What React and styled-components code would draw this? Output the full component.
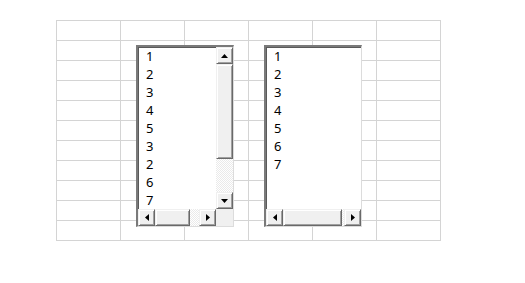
import React from "react";
import styled, { createGlobalStyle } from "styled-components";

const GlobalStyle = createGlobalStyle`
  html, body {
    margin: 0;
    padding: 0;
    background: #ffffff;
  }
`;

const Page = styled.div`
  position: relative;
  width: 525px;
  height: 283px;
  padding: 20px 0 0 56px;
  box-sizing: border-box;
  font-family: "Noto Sans", "Open Sans", sans-serif;
`;

// Spreadsheet background
const Sheet = styled.div`
  display: grid;
  grid-template-columns: repeat(6, 64px);
  grid-auto-rows: 20px;
  width: fit-content;
  border-top: 1px solid #d4d4d4;
  border-left: 1px solid #d4d4d4;
`;

const Cell = styled.div`
  border-right: 1px solid #d4d4d4;
  border-bottom: 1px solid #d4d4d4;
`;

// List box control sitting on the sheet
const ListBox = styled.div`
  position: absolute;
  top: 45px;
  left: ${(p) => p.$left}px;
  width: 98px;
  height: 182px;
  box-sizing: border-box;
  border-top: 2px solid #7a7a7a;
  border-left: 2px solid #7a7a7a;
  border-right: 1px solid #dcdcdc;
  border-bottom: 1px solid #dcdcdc;
  box-shadow: inset 1px 1px 0 #5a5a5a;
  background: #fff;
  display: grid;
  grid-template-columns: ${(p) => (p.$vscroll ? "1fr 17px" : "1fr")};
  grid-template-rows: 1fr 17px;
`;

const Items = styled.ul`
  list-style: none;
  margin: 0;
  padding: 0 0 0 8px;
  overflow: hidden;
`;

const Item = styled.li`
  height: 18px;
  line-height: 18px;
  font-size: 13px;
  color: #000;
`;

const VBar = styled.div`
  display: flex;
  flex-direction: column;
`;

const HBar = styled.div`
  display: flex;
`;

const Btn = styled.div`
  flex: 0 0 17px;
  box-sizing: border-box;
  background: #f0f0f0;
  border-top: 1px solid #f0f0f0;
  border-left: 1px solid #f0f0f0;
  border-right: 1px solid #696969;
  border-bottom: 1px solid #696969;
  box-shadow: inset 1px 1px 0 #ffffff, inset -1px -1px 0 #a0a0a0;
  display: flex;
  align-items: center;
  justify-content: center;
`;

const Thumb = styled(Btn)`
  flex: 0 0 ${(p) => p.$size}px;
`;

const Track = styled.div`
  flex: 1;
  background: repeating-conic-gradient(#eaeaea 0 25%, #ffffff 0 50%) 0 0 / 2px 2px;
`;

const Corner = styled.div`
  background: #f0f0f0;
`;

const Arrow = ({ dir }) => {
  const pts = {
    up: "0,4 7,4 3.5,0",
    down: "0,0 7,0 3.5,4",
    left: "4,0 4,7 0,3.5",
    right: "0,0 0,7 4,3.5",
  }[dir];
  const vertical = dir === "up" || dir === "down";
  return (
    <svg width={vertical ? 7 : 4} height={vertical ? 4 : 7} viewBox={vertical ? "0 0 7 4" : "0 0 4 7"}>
      <polygon points={pts} fill="#000" />
    </svg>
  );
};

const first = ["1", "2", "3", "4", "5", "3", "2", "6", "7"];
const second = ["1", "2", "3", "4", "5", "6", "7"];

export default function App() {
  return (
    <>
      <GlobalStyle />
      <Page>
        <Sheet>
          {Array.from({ length: 66 }).map((_, i) => (
            <Cell key={i} />
          ))}
        </Sheet>

        <ListBox $left={136} $vscroll>
          <Items>
            {first.map((v, i) => (
              <Item key={i}>{v}</Item>
            ))}
          </Items>
          <VBar>
            <Btn><Arrow dir="up" /></Btn>
            <Thumb $size={95} />
            <Track />
            <Btn><Arrow dir="down" /></Btn>
          </VBar>
          <HBar>
            <Btn><Arrow dir="left" /></Btn>
            <Thumb $size={35} />
            <Track />
            <Btn><Arrow dir="right" /></Btn>
          </HBar>
          <Corner />
        </ListBox>

        <ListBox $left={264}>
          <Items>
            {second.map((v, i) => (
              <Item key={i}>{v}</Item>
            ))}
          </Items>
          <HBar>
            <Btn><Arrow dir="left" /></Btn>
            <Thumb $size={59} />
            <Track />
            <Btn><Arrow dir="right" /></Btn>
          </HBar>
        </ListBox>
      </Page>
    </>
  );
}
